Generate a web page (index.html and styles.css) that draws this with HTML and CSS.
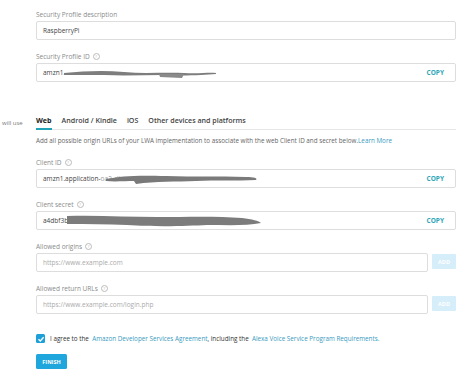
FILE: index.html
```html
<!DOCTYPE html>
<html>

<head>
    <meta charset="utf-8">
    <meta name='viewport' content='width=device-width initial-scale=1'>
    <title>Security Profile</title>
    <link rel="stylesheet" href="styles.css">
</head>

<body>
    <div class="page">
        <aside class="side">
            <p class="side_text">will use</p>
        </aside>
        <main class="main">
            <section class="profile">
                <div class="field">
                    <label class="label">Security Profile description</label>
                    <div class="input">
                        <span class="value">RaspberryPi</span>
                    </div>
                </div>
                <div class="field">
                    <label class="label">Security Profile ID <span class="help">?</span></label>
                    <div class="input">
                        <span class="value">amzn1.</span>
                        <svg class="scribble" width="160" height="12" viewBox="0 0 160 12">
                            <path d="M0 6 C20 4 40 3 60 5 C80 7 100 5 120 6 C135 7 145 5 152 6 L152 7 C140 8 120 9 100 8 C80 8 60 9 40 8 C25 8 10 8 0 8 Z" fill="#7d7d7d"/>
                            <path d="M95 7 L120 7 L118 11 L96 10 Z" fill="#8a8a8a"/>
                        </svg>
                        <span class="copy">COPY</span>
                    </div>
                </div>
            </section>

            <nav class="tabs">
                <span class="tab active">Web</span>
                <span class="tab">Android / Kindle</span>
                <span class="tab">iOS</span>
                <span class="tab">Other devices and platforms</span>
            </nav>
            <p class="desc">Add all possible origin URLs of your LWA implementation to associate with the web Client ID and secret below.<a class="link">Learn More</a></p>

            <section class="web">
                <div class="field">
                    <label class="label">Client ID <span class="help">?</span></label>
                    <div class="input">
                        <span class="value">amzn1.application-<span class="faded">oa2-clie</span></span>
                        <svg class="scribble over" width="160" height="12" viewBox="0 0 160 12">
                            <path d="M0 6 C15 3 30 2 60 3 C90 4 110 3 140 4 C148 4 152 5 150 7 C130 8 110 7 90 8 C70 9 50 8 30 11 L28 8 C20 8 8 9 0 8 Z" fill="#7a7a7a"/>
                        </svg>
                        <span class="copy">COPY</span>
                    </div>
                </div>
                <div class="field">
                    <label class="label">Client secret <span class="help">?</span></label>
                    <div class="input">
                        <span class="value">a4dbf3b</span>
                        <svg class="scribble wide" width="200" height="14" viewBox="0 0 200 14">
                            <path d="M0 2 C30 1 60 3 90 3 C120 3 150 2 175 4 C185 5 192 7 194 9 C180 12 160 11 140 11 C120 12 90 13 60 11 C40 10 20 10 0 10 Z" fill="#7c7c7c"/>
                        </svg>
                        <span class="copy">COPY</span>
                    </div>
                </div>
                <div class="field">
                    <label class="label">Allowed origins <span class="help">?</span></label>
                    <div class="row">
                        <div class="input">
                            <span class="placeholder">https://www.example.com</span>
                        </div>
                        <button class="add">ADD</button>
                    </div>
                </div>
                <div class="field">
                    <label class="label">Allowed return URLs <span class="help">?</span></label>
                    <div class="row">
                        <div class="input">
                            <span class="placeholder">https://www.example.com/login.php</span>
                        </div>
                        <button class="add">ADD</button>
                    </div>
                </div>
            </section>

            <div class="agree">
                <span class="check">
                    <svg width="8" height="8" viewBox="0 0 8 8"><path d="M1.5 4.2 L3.3 6 L6.6 2.2" fill="none" stroke="#fff" stroke-width="1.3"/></svg>
                </span>
                <span class="agree_text">I agree to the&nbsp; <a class="link">Amazon Developer Services Agreement</a>, including the&nbsp; <a class="link">Alexa Voice Service Program Requirements.</a></span>
            </div>
            <button class="finish">FINISH</button>
        </main>
    </div>
</body>

</html>
```

FILE: styles.css
```css
html {
    background-color: #fff;
}

body {
    margin: 0;
    font-family: "Open Sans", "Liberation Sans", sans-serif;
    font-size: 6.5px;
    color: #333;
}

.page {
    display: flex;
}

.side {
    width: 36px;
    flex: none;
}

.side_text {
    margin: 119px 0 0 2px;
    color: #777;
    font-size: 6px;
}

.main {
    width: 420px;
    padding-top: 9px;
}

.field {
    margin-bottom: 11px;
}

.label {
    display: flex;
    align-items: center;
    gap: 3px;
    height: 10px;
    margin-bottom: 2px;
    color: #8a8a8a;
    font-size: 6.5px;
}

.help {
    display: inline-flex;
    align-items: center;
    justify-content: center;
    width: 5px;
    height: 5px;
    border: 0.8px solid #bbb;
    border-radius: 50%;
    font-size: 4px;
    color: #bbb;
}

.input {
    display: flex;
    align-items: center;
    height: 17px;
    border: 1px solid #ddd;
    border-radius: 2px;
    padding: 0 6px;
    background-color: #fff;
    overflow: hidden;
}

.value {
    color: #444;
    white-space: nowrap;
}

.faded {
    color: #999;
}

.scribble {
    flex: none;
    margin-left: -1px;
}

.scribble.over {
    margin-left: -18px;
}

.scribble.wide {
    width: 200px;
    height: 14px;
}

.copy {
    margin-left: auto;
    margin-right: 5px;
    color: #2fa6b8;
    font-weight: 700;
    font-size: 6.5px;
}

.placeholder {
    color: #aaa;
}

.row {
    display: flex;
    gap: 4px;
}

.row .input {
    flex: 1;
}

.add {
    width: 24px;
    height: 15px;
    margin-top: 1px;
    border: none;
    border-radius: 1px;
    background-color: #d5eef9;
    color: #fff;
    font-family: inherit;
    font-size: 5.5px;
    font-weight: 700;
    padding: 0;
}

.profile {
    margin-bottom: 29px;
}

.tabs {
    display: flex;
    gap: 10px;
    height: 18px;
    align-items: center;
    border-bottom: 1px solid #e6e6e6;
}

.tab {
    position: relative;
    color: #444;
    font-size: 7.1px;
    font-weight: 600;
    height: 18px;
    line-height: 18px;
}

.tab.active {
    color: #222;
    font-weight: 700;
}

.tab.active::after {
    content: "";
    position: absolute;
    left: 0;
    right: 0;
    bottom: -1px;
    height: 2px;
    background-color: #21a3b7;
}

.desc {
    margin: 6px 0 11px 0;
    color: #666;
    font-size: 6.3px;
    line-height: 10px;
}

.link {
    color: #3b9bc0;
}

.web .field:last-child {
    margin-bottom: 20px;
}

.agree {
    display: flex;
    align-items: center;
    gap: 5px;
}

.check {
    display: inline-flex;
    align-items: center;
    justify-content: center;
    width: 9px;
    height: 9px;
    border-radius: 1.5px;
    background-color: #1d9fd8;
}

.agree_text {
    color: #333;
    font-size: 6.3px;
}

.finish {
    margin-top: 11px;
    width: 31px;
    height: 15px;
    padding: 0;
    border: none;
    border-radius: 1.5px;
    background-color: #1fa6dc;
    color: #fff;
    font-family: inherit;
    font-size: 5.5px;
    font-weight: 700;
}
```
